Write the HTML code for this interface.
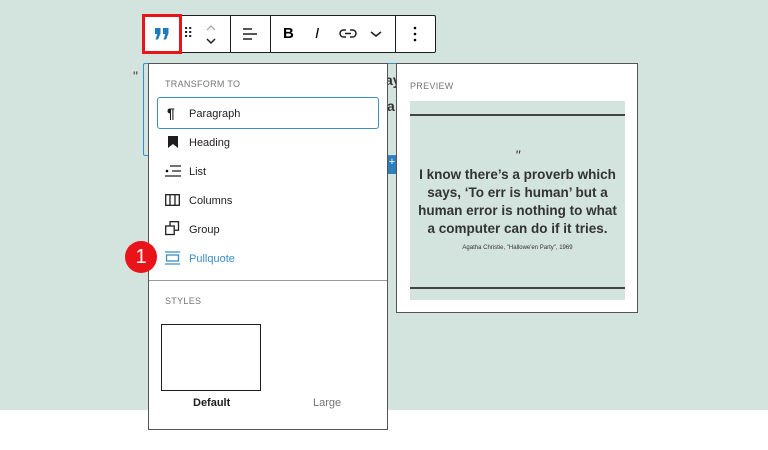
<!DOCTYPE html>
<html><head><style>
*{box-sizing:border-box;margin:0;padding:0}
body{width:768px;height:450px;position:relative;background:#fff;font-family:"Liberation Sans",sans-serif;overflow:hidden}
.bg{position:absolute;left:0;top:0;width:768px;height:410px;background:#d3e3dd}
.abs{position:absolute}
.tb{left:142px;top:15px;width:294px;height:38px;background:#fff;border:1px solid #1e1e1e;border-radius:2px}
.sep{position:absolute;top:0;width:1px;height:36px;background:#1e1e1e}
.menu{left:148px;top:63px;width:240px;height:367px;background:#fff;border:1px solid #555}
.item{position:absolute;left:16px;font-size:11px;color:#1e1e1e}
.lab{font-size:9px;color:#757575;letter-spacing:.3px}
</style></head><body>
<div class="bg"></div>
<div class="abs" style="left:143px;top:63px;width:260px;height:93px;border:1px solid #3a8fc8;border-radius:2px"></div>
<div class="abs" style="left:133px;top:68px;font-size:14px;color:#444">"</div>
<div class="abs" style="left:385px;top:72px;font-weight:bold;font-size:14px;color:#333">ay</div>
<div class="abs" style="left:387px;top:98px;font-weight:bold;font-size:14px;color:#333">a</div>
<div class="abs" style="left:387px;top:156px;width:10px;height:18px;background:#2f7fbf;color:#fff;font-size:11px;text-align:center">+</div>
<div class="abs tb">
 <div class="sep" style="left:87px"></div><div class="sep" style="left:127px"></div><div class="sep" style="left:252px"></div>
 <div class="abs" style="left:40px;top:9px;font-size:14px;color:#1e1e1e;letter-spacing:-1px">⠿</div>
 <svg class="abs" style="left:62px;top:8px" width="12" height="22"><path d="M2 6l4-4 4 4" fill="none" stroke="#aaa" stroke-width="1.3"/><path d="M2 15l4 4 4-4" fill="none" stroke="#1e1e1e" stroke-width="1.5"/></svg>
 <svg class="abs" style="left:99px;top:10px" width="16" height="16"><path d="M1 3h9M1 8h14M1 13h9" stroke="#1e1e1e" stroke-width="1.5"/></svg>
 <div class="abs" style="left:140px;top:9px;font-weight:bold;font-size:15px">B</div>
 <div class="abs" style="left:172px;top:9px;font-style:italic;font-size:15px">I</div>
 <svg class="abs" style="left:196px;top:12px" width="18" height="12"><path d="M7 2H4.5a3.5 3.5 0 000 7H7M11 2h2.5a3.5 3.5 0 010 7H11M6 5.5h6" fill="none" stroke="#1e1e1e" stroke-width="1.5"/></svg>
 <svg class="abs" style="left:227px;top:14px" width="12" height="8"><path d="M1 2l5 4 5-4" fill="none" stroke="#1e1e1e" stroke-width="1.5"/></svg>
 <svg class="abs" style="left:270px;top:9px" width="4" height="18"><circle cx="2" cy="3" r="1.3"/><circle cx="2" cy="9" r="1.3"/><circle cx="2" cy="15" r="1.3"/></svg>
</div>
<div class="abs" style="left:142px;top:14px;width:40px;height:40px;border:3px solid #e8141a"></div>
<svg class="abs" style="left:155px;top:28px" width="14" height="12"><path d="M0 0h5.5v5.5l-2.5 6H0.5l1.8-5.5H0z M8 0h5.5v5.5l-2.5 6H8.5l1.8-5.5H8z" fill="#1f7bbf"/></svg>
<div class="abs menu">
 <div class="abs lab" style="left:16px;top:15px">TRANSFORM TO</div>
 <div class="abs" style="left:8px;top:33px;width:222px;height:32px;border:1px solid #3a8fc8;border-radius:3px"></div>
 <div class="item" style="top:41px;font-weight:bold;font-size:14px;left:18px">¶</div><div class="item" style="top:44px;left:40px">Paragraph</div>
 <svg class="abs" style="left:19px;top:72px" width="10" height="12"><path d="M0 0h10v12l-5-4-5 4z" fill="#1e1e1e"/></svg><div class="item" style="top:73px;left:40px">Heading</div>
 <svg class="abs" style="left:16px;top:101px" width="16" height="12"><path d="M5 1h11M7 6h9M0 11h16" stroke="#1e1e1e" stroke-width="1.3"/><circle cx="2" cy="6" r="1.3"/></svg><div class="item" style="top:102px;left:40px">List</div>
 <svg class="abs" style="left:16px;top:130px" width="15" height="12"><rect x=".7" y=".7" width="13.6" height="10.6" fill="none" stroke="#1e1e1e" stroke-width="1.3"/><path d="M5 1v10M10 1v10" stroke="#1e1e1e" stroke-width="1.3"/></svg><div class="item" style="top:131px;left:40px">Columns</div>
 <svg class="abs" style="left:16px;top:157px" width="15" height="15"><rect x="5" y=".7" width="8.5" height="8.5" fill="none" stroke="#1e1e1e" stroke-width="1.3"/><rect x=".7" y="5" width="8.5" height="8.5" fill="#fff" stroke="#1e1e1e" stroke-width="1.3"/></svg><div class="item" style="top:160px;left:40px">Group</div>
 <svg class="abs" style="left:16px;top:187px" width="15" height="14"><path d="M0 1h15M0 13h15" stroke="#3a8fc8" stroke-width="1.3"/><rect x="1.5" y="4" width="12" height="6" fill="none" stroke="#3a8fc8" stroke-width="1.3"/></svg><div class="item" style="top:189px;left:40px;color:#3a8fc8">Pullquote</div>
 <div class="abs" style="left:0;top:216px;width:238px;height:1px;background:#999"></div>
 <div class="abs lab" style="left:16px;top:232px">STYLES</div>
 <div class="abs" style="left:12px;top:260px;width:100px;height:67px;border:1.5px solid #1e1e1e"></div>
 <div class="item" style="top:333px;left:44px;font-weight:bold">Default</div>
 <div class="item" style="top:333px;left:164px;color:#757575">Large</div>
</div>
<div class="abs" style="left:125px;top:241px;width:32px;height:32px;border-radius:50%;background:#e8141a;color:#fff;font-size:20px;text-align:center;line-height:32px">1</div>
<div class="abs" style="left:396px;top:63px;width:242px;height:250px;background:#fff;border:1px solid #555">
 <div class="abs lab" style="left:13px;top:17px">PREVIEW</div>
 <div class="abs" style="left:13px;top:37px;width:215px;height:199px;background:#d3e3dd">
  <div class="abs" style="left:0;top:13px;width:215px;height:1.5px;background:#444"></div>
  <div class="abs" style="left:0;top:186px;width:215px;height:1.5px;background:#444"></div>
  <div class="abs" style="left:0;top:46px;width:215px;text-align:center;font-size:14px;color:#333;font-style:italic">"</div>
  <div class="abs" style="left:0;top:65px;width:215px;text-align:center;font-size:13.5px;line-height:18px;font-weight:bold;color:#333;white-space:nowrap">I know there’s a proverb which<br>says, ‘To err is human’ but a<br>human error is nothing to what<br>a computer can do if it tries.</div>
  <div class="abs" style="left:0;top:144px;width:215px;text-align:center;font-size:6px;color:#333">Agatha Christie, "Hallowe'en Party", 1969</div>
 </div>
</div>
</body></html>
